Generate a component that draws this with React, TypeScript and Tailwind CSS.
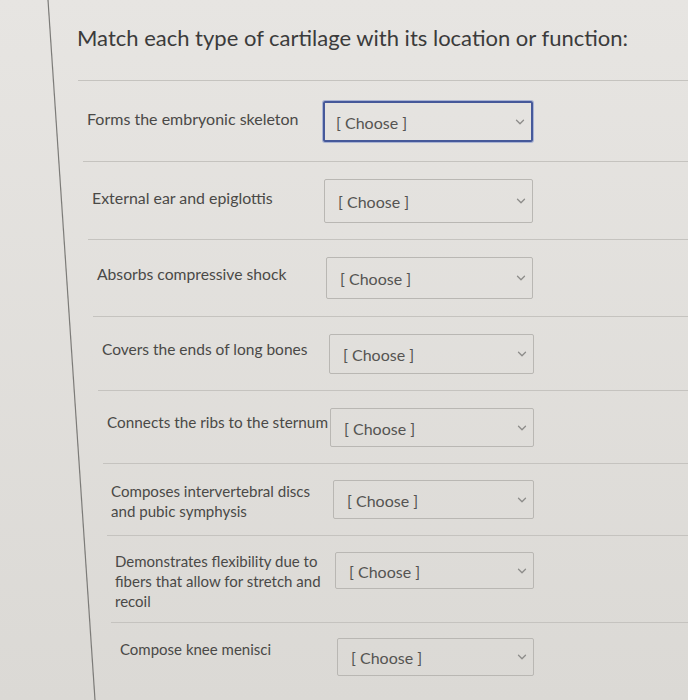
import { ChevronDown } from 'lucide-react';

type Row = {
  label: string;
  rowClass: string;
  labelClass: string;
  selectClass: string;
  focused?: boolean;
};

const rows: Row[] = [
  {
    label: 'Forms the embryonic skeleton',
    rowClass: 'ml-[83px] pt-[20px] pb-[19px] border-b',
    labelClass: 'w-[236px] mt-[8px] text-[16px]',
    selectClass: 'w-[210px] h-[41px]',
    focused: true,
  },
  {
    label: 'External ear and epiglottis',
    rowClass: 'ml-[88px] pt-[17px] pb-[16px] border-b',
    labelClass: 'w-[232px] mt-[9px] text-[15.9px]',
    selectClass: 'w-[209px] h-[44px]',
  },
  {
    label: 'Absorbs compressive shock',
    rowClass: 'ml-[93px] pt-[17px] pb-[17px] border-b',
    labelClass: 'w-[229px] mt-[7px] text-[15.7px]',
    selectClass: 'w-[207px] h-[42px]',
  },
  {
    label: 'Covers the ends of long bones',
    rowClass: 'ml-[98px] pt-[17px] pb-[16px] border-b',
    labelClass: 'w-[227px] mt-[5px] text-[15.5px]',
    selectClass: 'w-[205px] h-[40px]',
  },
  {
    label: 'Connects the ribs to the sternum',
    rowClass: 'ml-[103px] pt-[17px] pb-[16px] border-b',
    labelClass: 'w-[223px] mt-[4px] text-[15.3px] whitespace-nowrap',
    selectClass: 'w-[204px] h-[39px]',
  },
  {
    label: 'Composes intervertebral discs and pubic symphysis',
    rowClass: 'ml-[107px] pt-[16px] pb-[14px] border-b',
    labelClass: 'w-[222px] mt-[1px] text-[15.1px]',
    selectClass: 'w-[201px] h-[39px]',
  },
  {
    label: 'Demonstrates flexibility due to fibers that allow for stretch and recoil',
    rowClass: 'ml-[111px] pt-[15px] pb-[11px] border-b',
    labelClass: 'w-[220px] mt-0 text-[15px]',
    selectClass: 'w-[199px] h-[37px] mt-[1px]',
  },
  {
    label: 'Compose knee menisci',
    rowClass: 'ml-[116px] pt-[15px] pb-[20px]',
    labelClass: 'w-[217px] mt-[1px] text-[15px]',
    selectClass: 'w-[197px] h-[38px]',
  },
];

function Select({ className, focused }: { className: string; focused?: boolean }) {
  return (
    <div
      className={
        'flex items-center justify-between pr-[4px] rounded-[2px] ' +
        (focused
          ? 'pl-[11px] border-2 border-[#46599a] ring-1 ring-[#aab4d4] '
          : 'pl-[13px] border border-[#b9b7b3] ') +
        className
      }
    >
      <span className="text-[16px] leading-[20px] pt-[2px] text-[#555452]">[ Choose ]</span>
      <ChevronDown size={14} strokeWidth={2.2} className="text-[#8d8c8a]" />
    </div>
  );
}

export default function App() {
  return (
    <div
      className="relative w-[688px] h-[700px] overflow-hidden bg-gradient-to-b from-[#e7e5e2] to-[#dbd9d5]"
      style={{ fontFamily: 'Lato, "Open Sans", sans-serif' }}
    >
      <svg className="absolute inset-0 pointer-events-none" width="688" height="700">
        <line x1="48" y1="0" x2="95" y2="700" stroke="#7c7b78" strokeWidth="1.2" />
      </svg>

      <div className="ml-[78px] pt-[24px] pb-[28px] border-b border-[#c5c3bf]">
        <h1 className="text-[22px] leading-[28px] text-[#3b3b3b] -ml-[1px]">
          Match each type of cartilage with its location or function:
        </h1>
      </div>

      {rows.map((row) => (
        <div key={row.label} className={'flex items-start pl-[4px] border-[#c5c3bf] ' + row.rowClass}>
          <div className={'leading-[20px] text-[#4a4947] ' + row.labelClass}>{row.label}</div>
          <Select className={row.selectClass} focused={row.focused} />
        </div>
      ))}
    </div>
  );
}
